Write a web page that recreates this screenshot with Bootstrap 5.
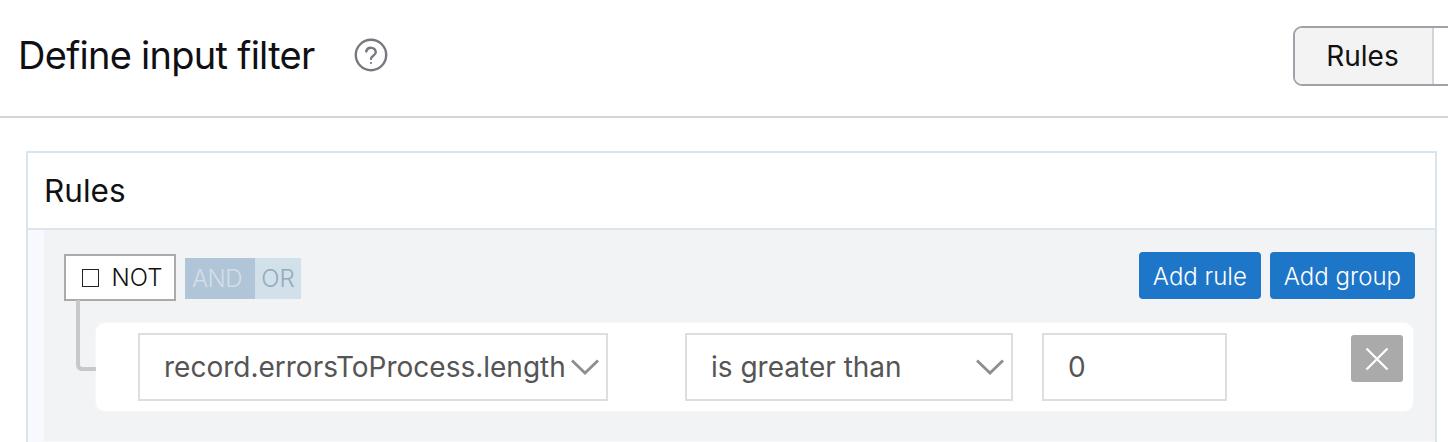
<!DOCTYPE html>
<html lang="en">
<head>
<meta charset="utf-8">
<title>Define input filter</title>
<link rel="stylesheet" href="https://cdn.jsdelivr.net/npm/bootstrap@5.3.0/dist/css/bootstrap.min.css">
<style>
html, body { height: 442px; overflow: hidden; }
body { font-family: Inter, "Liberation Sans", sans-serif; background: #fff; color: #111; }
.page-head { height: 118px; border-bottom: 2px solid #d4d4d8; padding: 0 0 6px 18px; }
.page-title { font-size: 38px; font-weight: 400; line-height: 1; margin: 0; letter-spacing: -0.72px; color: #0f0f14; }
.help-ico { margin: 0 0 0 39px; width: 34px; height: 34px; display: block; }
.view-toggle { margin-left: auto; margin-right: -80px; margin-top: 1px; height: 60px; width: 235px; flex-shrink: 0; border: 2px solid #a1a1aa; border-radius: 9px 0 0 9px; }
.view-toggle-on { width: 139px; background: #f3f3f4; border-right: 2px solid #d4d4d8; font-size: 28px; color: #111; border-radius: 7px 0 0 7px; padding-right: 2px; }
.rules-panel { margin: 33px 11px 0 26px; border: 2px solid #d8e5ee; border-bottom: 0; height: 291px; }
.rules-title { height: 77px; padding-left: 16px; font-size: 31.5px; border-bottom: 2px solid #dfe5ec; color: #111; }
.rules-body { height: 212px; border-left: 16px solid #f8f9fe; border-bottom: 1px solid #f8f9fb; background: #f2f3f5; padding: 24px 20px 0 20px; }
.not-box { width: 112px; height: 47px; border: 2px solid #aaa; background: #fff; font-size: 24px; font-weight: 300; color: #111; margin-bottom: 0; padding-left: 4px; }
.not-check { width: 17px; height: 18px; border: 1.5px solid #222; margin-right: 13px; }
.logic-btns { margin: 4px 0 0 9px; height: 41px; font-size: 24px; font-weight: 300; }
.logic-and { width: 70px; background: #b0c5d7; color: #d3dee7; padding-right: 6px; letter-spacing: -0.5px; }
.logic-or { width: 46px; background: #d2e0ea; color: #91abbd; }
.add-btns { margin-top: -2px; gap: 9px; }
.add-btn { height: 47px; background: #1e76c8; color: #fff; border: 0; border-radius: 4px; font-size: 24px; padding: 3px 14px 0; line-height: 1; font-weight: 300; }
.rule-row { position: relative; margin-top: 22px; margin-left: 32px; width: 1317px; height: 88px; background: #fff; border-radius: 9px; padding: 10px 10px 0 42px; box-shadow: 0 0 0 1px #f7f7f8; }
.rule-row::before { content: ""; position: absolute; left: -20px; top: -23px; width: 20px; height: 71px; border-left: 4px solid #c8c8c8; border-bottom: 4px solid #c8c8c8; border-radius: 0 0 0 6px; }
.rule-field { height: 68px; border: 2px solid #dedede; background: #fff; color: #555; font-size: 28px; padding-left: 24px; }
.rule-a { width: 470px; }
.rule-b { width: 328px; margin-left: 77px; }
.rule-c { width: 185px; margin-left: 29px; }
.chev { width: 28px; height: 16px; margin-left: auto; margin-right: 7px; }
.del-btn { width: 52px; height: 47px; margin-left: auto; margin-top: 2px; background: #aaa; border-radius: 3px; border: 0; padding: 0; }
.del-btn svg { width: 24px; height: 24px; display: block; margin: auto; }
</style>
</head>
<body>
<header class="page-head d-flex align-items-center">
  <h1 class="page-title">Define input filter</h1>
  <svg class="help-ico" viewBox="0 0 34 34" fill="none" stroke="#77777f" stroke-width="2.4" stroke-linecap="round">
    <circle cx="17" cy="17" r="15.2"/>
    <path d="M12.2 13.4a4.9 4.9 0 0 1 9.6 .9c0 3.2-4.8 3.6-4.8 6.4"/>
    <circle cx="17" cy="25" r="1.1" fill="#77777f" stroke="none"/>
  </svg>
  <div class="view-toggle d-flex">
    <div class="view-toggle-on d-flex align-items-center justify-content-center">Rules</div>
  </div>
</header>
<section class="rules-panel">
  <div class="rules-title d-flex align-items-center">Rules</div>
  <div class="rules-body">
    <div class="d-flex">
      <label class="not-box d-flex align-items-center justify-content-center"><span class="not-check d-block"></span>NOT</label>
      <div class="logic-btns d-flex">
        <div class="logic-and d-flex align-items-center justify-content-center">AND</div>
        <div class="logic-or d-flex align-items-center justify-content-center">OR</div>
      </div>
      <div class="add-btns ms-auto d-flex">
        <button type="button" class="btn add-btn">Add rule</button>
        <button type="button" class="btn add-btn">Add group</button>
      </div>
    </div>
    <div class="rule-row d-flex">
      <div class="rule-field rule-a d-flex align-items-center text-nowrap">record.errorsToProcess.length
        <svg class="chev" viewBox="0 0 28 16" fill="none" stroke="#8e8e8e" stroke-width="2.8"><path d="M1 1.5 14 14 27 1.5"/></svg>
      </div>
      <div class="rule-field rule-b d-flex align-items-center text-nowrap">is greater than
        <svg class="chev" viewBox="0 0 28 16" fill="none" stroke="#8e8e8e" stroke-width="2.8"><path d="M1 1.5 14 14 27 1.5"/></svg>
      </div>
      <div class="rule-field rule-c d-flex align-items-center">0</div>
      <button type="button" class="del-btn d-flex align-items-center" aria-label="Delete">
        <svg viewBox="0 0 24 24" fill="none" stroke="#fff" stroke-width="2.2"><path d="M1.5 1.5 22.5 22.5M22.5 1.5 1.5 22.5"/></svg>
      </button>
    </div>
  </div>
</section>
<script src="https://cdn.jsdelivr.net/npm/bootstrap@5.3.0/dist/js/bootstrap.bundle.min.js"></script>
</body>
</html>
